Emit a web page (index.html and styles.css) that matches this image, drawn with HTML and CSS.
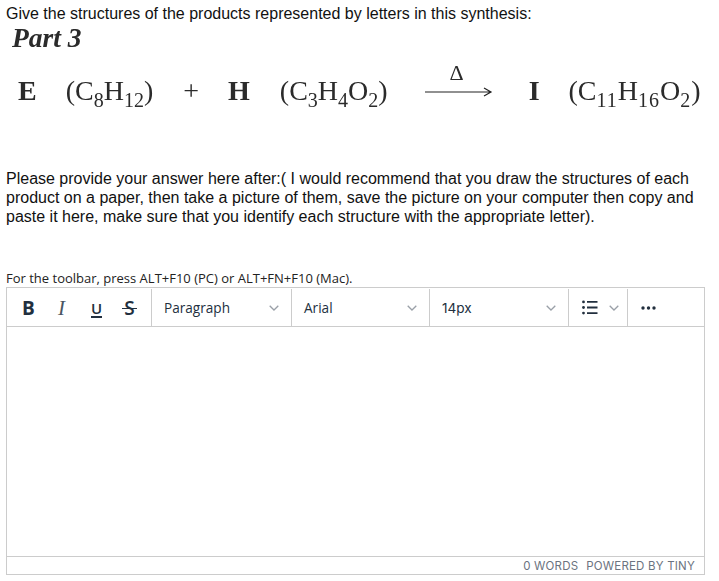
FILE: index.html
```html
<!DOCTYPE html>
<html lang="en">
<head>
    <meta charset="UTF-8">
    <title>Question</title>
    <link rel="stylesheet" href="styles.css">
</head>
<body>
    <p class="intro">Give the structures of the products represented by letters in this synthesis:</p>

    <div class="scheme">
        <div class="part">Part 3</div>
        <div class="equation">
            <b class="eq-e">E</b>
            <span class="eq-f1">(C<sub>8</sub>H<sub>12</sub>)</span>
            <span class="eq-plus">+</span>
            <b class="eq-h">H</b>
            <span class="eq-f2">(C<sub>3</sub>H<sub>4</sub>O<sub>2</sub>)</span>
            <span class="arrow">
                <span class="delta">Δ</span>
                <svg width="68" height="10" viewBox="0 0 68 10"><path d="M0 5H66M59 1l7 4-7 4" fill="none" stroke="#222" stroke-width="1.2"/></svg>
            </span>
            <b class="eq-i">I</b>
            <span class="eq-f3">(C<sub>11</sub>H<sub>16</sub>O<sub>2</sub>)</span>
        </div>
    </div>

    <p class="prompt">Please provide your answer here after:( I would recommend that you draw the structures of each product on a paper, then take a picture of them, save the picture on your computer then copy and paste it here, make sure that you identify each structure with the appropriate letter).</p>

    <div class="hint">For the toolbar, press ALT+F10 (PC) or ALT+FN+F10 (Mac).</div>

    <div class="editor">
        <div class="toolbar">
            <div class="group group-format">
                <span class="fmt fmt-b">B</span>
                <span class="fmt fmt-i">I</span>
                <span class="fmt fmt-u">U</span>
                <span class="fmt fmt-s">S</span>
            </div>
            <div class="group select select-block">
                <span>Paragraph</span>
                <svg class="chevron" width="10" height="6" viewBox="0 0 10 6"><path d="M.7.7 5 5l4.300-4.300" fill="none" stroke="#9aa0a8" stroke-width="1.300"/></svg>
            </div>
            <div class="group select select-font">
                <span>Arial</span>
                <svg class="chevron" width="10" height="6" viewBox="0 0 10 6"><path d="M.7.7 5 5l4.300-4.300" fill="none" stroke="#9aa0a8" stroke-width="1.300"/></svg>
            </div>
            <div class="group select select-size">
                <span class="size-label">14px</span>
                <svg class="chevron" width="10" height="6" viewBox="0 0 10 6"><path d="M.7.7 5 5l4.300-4.300" fill="none" stroke="#9aa0a8" stroke-width="1.300"/></svg>
            </div>
            <div class="group group-list">
                <svg width="16" height="15" viewBox="0 0 16 15"><path d="M5 1h10.500v1.800H5zM5 6.600h10.500v1.800H5zM5 12.200h10.500V14H5z" fill="#222f3e"/><circle cx="1.500" cy="1.900" r="1.400" fill="#222f3e"/><circle cx="1.500" cy="7.500" r="1.400" fill="#222f3e"/><circle cx="1.500" cy="13.100" r="1.400" fill="#222f3e"/></svg>
                <svg class="chevron" width="10" height="6" viewBox="0 0 10 6"><path d="M.7.7 5 5l4.300-4.300" fill="none" stroke="#9aa0a8" stroke-width="1.300"/></svg>
            </div>
            <div class="group group-more">
                <svg width="15" height="4" viewBox="0 0 15 4"><circle cx="2" cy="2" r="1.700" fill="#222f3e"/><circle cx="7.500" cy="2" r="1.700" fill="#222f3e"/><circle cx="13" cy="2" r="1.700" fill="#222f3e"/></svg>
            </div>
        </div>
        <div class="content"></div>
        <div class="statusbar">
            <span>0 WORDS</span>
            <span>POWERED BY TINY</span>
        </div>
    </div>
</body>
</html>
```

FILE: styles.css
```css
body {
    margin: 0;
    padding: 0 14px 0 6px;
    font-family: "Liberation Sans", Arial, sans-serif;
    color: #111;
    background: white;
    overflow: hidden;
}
.intro {
    margin: 0;
    padding-top: 5px;
    font-size: 16px;
    line-height: 18px;
}
.scheme {
    padding-left: 6px;
    font-family: "Liberation Serif", "Times New Roman", serif;
    color: #2b2b2b;
    filter: blur(0.3px);
}
.part {
    margin-top: -1px;
    font-size: 27.5px;
    line-height: 32px;
    font-weight: bold;
    font-style: italic;
}
.equation {
    display: flex;
    align-items: baseline;
    height: 40px;
    margin-top: 17px;
    padding-left: 6px;
    font-size: 28px;
    line-height: 40px;
    white-space: nowrap;
}
.equation sub {
    font-size: 20px;
    line-height: 0;
    vertical-align: -7px;
}
.eq-f1 { margin-left: 29px; }
.eq-plus { margin-left: 30px; }
.eq-h { margin-left: 29px; }
.eq-f2 { margin-left: 30px; }
.arrow {
    display: flex;
    flex-direction: column;
    align-items: center;
    align-self: flex-start;
    width: 68px;
    margin-left: 37px;
    margin-top: -10px;
}
.delta {
    margin-right: 4px;
    font-size: 22px;
    line-height: 24px;
}
.arrow svg {
    display: block;
    margin-top: 2px;
}
.eq-i { margin-left: 36px; }
.eq-f3 { margin-left: 29px; }
.eq-f3 sub { letter-spacing: 1px; }
.prompt {
    margin: 58px 0 0;
    font-size: 16px;
    line-height: 19px;
}
.hint {
    margin-top: 43px;
    font-family: "Open Sans", sans-serif;
    font-size: 13px;
    line-height: 18px;
    color: #222;
}
.editor {
    display: flex;
    flex-direction: column;
    height: 288px;
    border: 1px solid #ccc;
    box-sizing: border-box;
    font-family: "Open Sans", sans-serif;
    color: #222f3e;
}
.toolbar {
    display: flex;
    height: 39px;
    flex: none;
    border-bottom: 1px solid #ccc;
    font-size: 13.6px;
    padding-top: 1px;
    box-sizing: border-box;
}
.group {
    display: flex;
    align-items: center;
    box-sizing: border-box;
    border-right: 1px solid #ccc;
}
.group-format {
    width: 145px;
    padding-left: 12px;
}
.fmt {
    position: relative;
    width: 20px;
    margin-right: 14px;
    text-align: center;
    font-size: 19px;
    line-height: 20px;
}
.fmt-b { font-weight: bold; }
.fmt-i {
    font-family: "Liberation Serif", serif;
    font-style: italic;
    font-size: 21px;
    color: #4a5562;
}
.fmt-u {
    left: 2px;
    font-size: 15px;
    font-weight: 600;
}
.fmt-u::after {
    content: "";
    position: absolute;
    left: 4px;
    right: 4px;
    bottom: 0;
    border-bottom: 2px solid #222f3e;
}
.fmt-s {
    left: 2px;
    font-weight: 600;
}
.fmt-s::after {
    content: "";
    position: absolute;
    left: 2px;
    right: 2px;
    top: 10px;
    border-bottom: 1.5px solid #222f3e;
}
.select {
    justify-content: space-between;
    padding: 0 12px;
}
.select-block { width: 140px; }
.select-font { width: 138px; }
.select-size { width: 139px; }
.size-label { font-family: Inter, sans-serif; }
.group-list {
    width: 59px;
    padding-left: 13px;
    gap: 11px;
}
.group-list .chevron { margin-top: 1px; }
.group-more {
    border-right: none;
    padding-left: 13px;
}
.content {
    flex: 1;
}
.statusbar {
    display: flex;
    justify-content: flex-end;
    gap: 8px;
    height: 17px;
    flex: none;
    padding-right: 9px;
    border-top: 1px solid #ccc;
    font-family: Inter, sans-serif;
    font-size: 11.5px;
    line-height: 18px;
    letter-spacing: 0.2px;
    color: #6b7380;
}
```
